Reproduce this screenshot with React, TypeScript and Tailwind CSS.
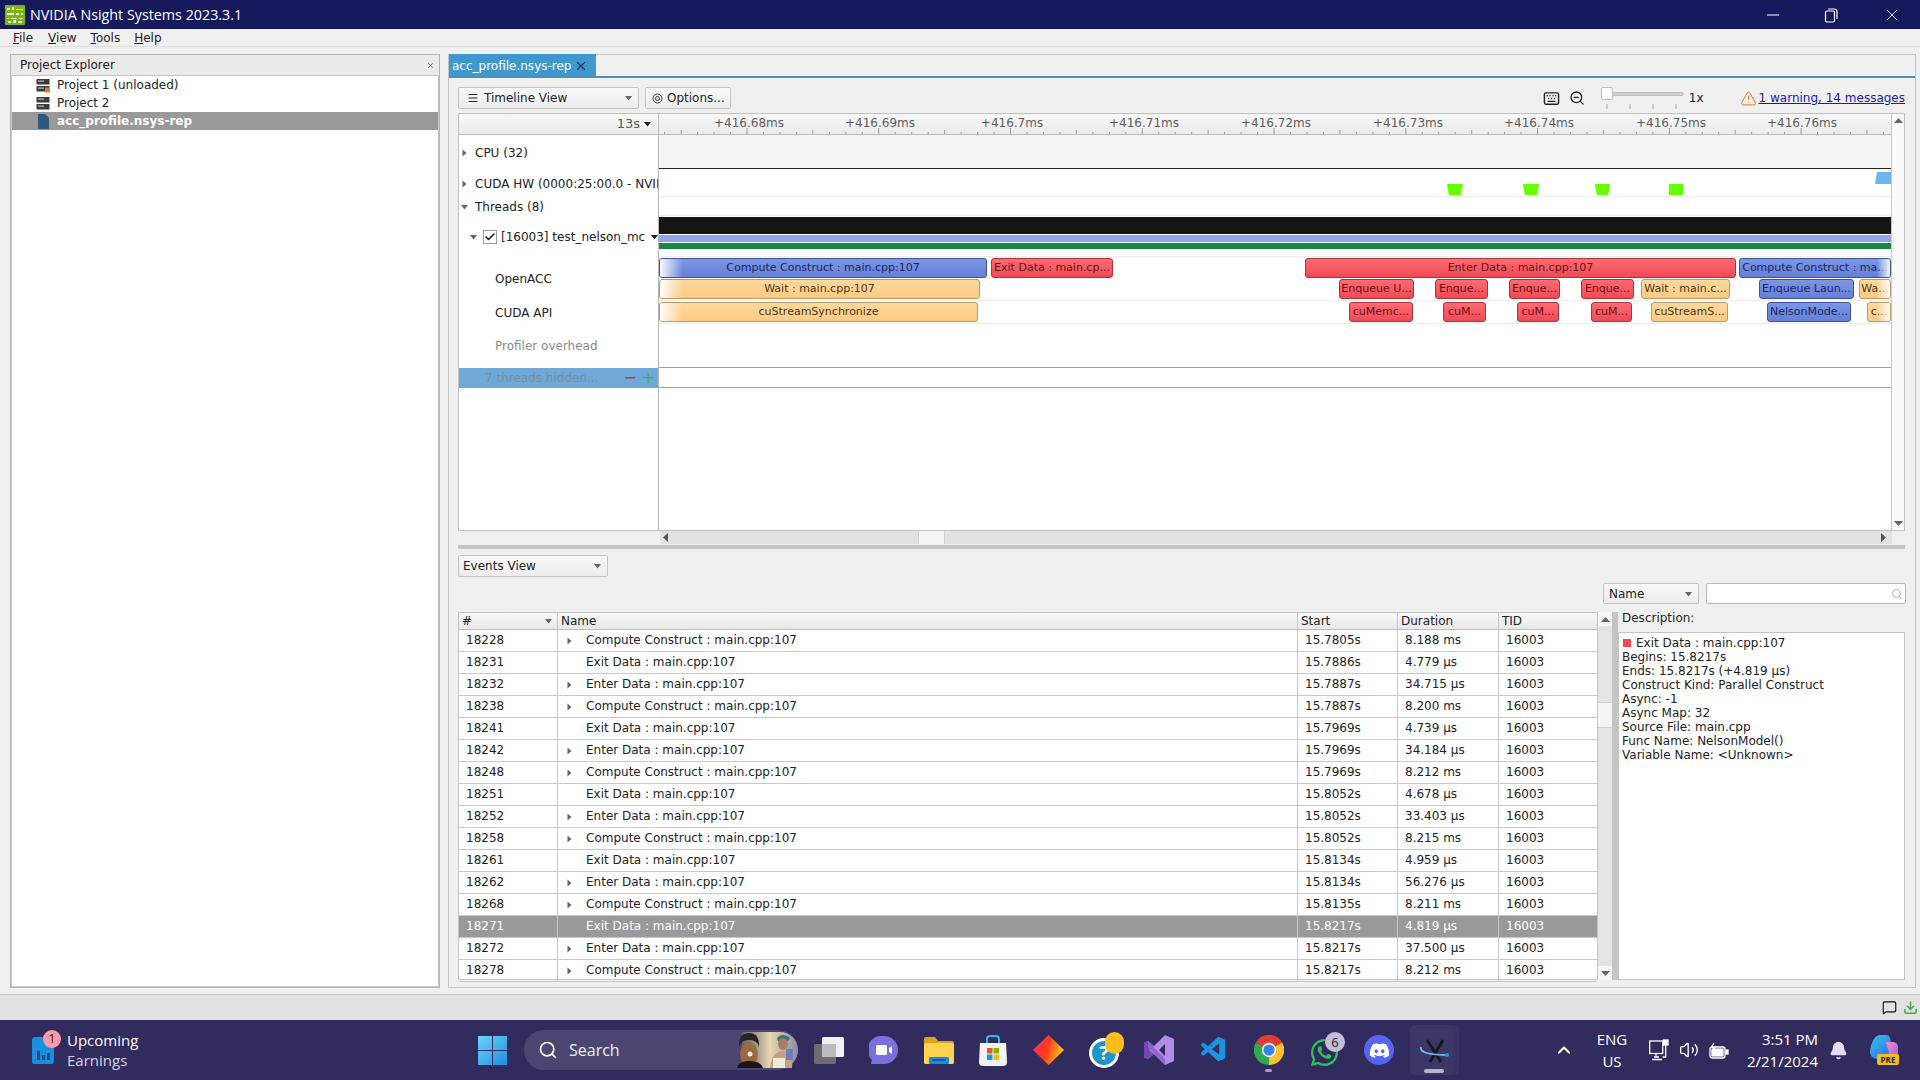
import React from "react";
import { ChevronUp, Search, Volume2, Bell, MessageSquare, Download, Menu, Keyboard, ZoomOut, TriangleAlert, Check, X } from "lucide-react";
import { FaDiscord, FaWhatsapp } from "react-icons/fa";
import { VscVscode } from "react-icons/vsc";

type Bar = { x: number; e: number; c: "r" | "b" | "o"; t: string; fl?: boolean; fr?: boolean };

const barStyles = {
  r: "bg-gradient-to-b from-[#ff6a72] to-[#ef4a55] border-[#a8343c] text-[#6a1118]",
  b: "bg-gradient-to-b from-[#7c96e6] to-[#6580d8] border-[#3f5296] text-[#1a2660]",
  o: "bg-gradient-to-b from-[#ffd89e] to-[#fdca82] border-[#b89a62] text-[#4a3713]",
};

const OFFSET = 659;

const row1: Bar[] = [
  { x: 659, e: 987, c: "b", t: "Compute Construct : main.cpp:107", fl: true },
  { x: 991, e: 1113, c: "r", t: "Exit Data : main.cp..." },
  { x: 1305, e: 1736, c: "r", t: "Enter Data : main.cpp:107" },
  { x: 1739, e: 1891, c: "b", t: "Compute Construct : ma...", fr: true },
];
const row2: Bar[] = [
  { x: 659, e: 980, c: "o", t: "Wait : main.cpp:107", fl: true },
  { x: 1339, e: 1414, c: "r", t: "Enqueue U..." },
  { x: 1435, e: 1488, c: "r", t: "Enque..." },
  { x: 1509, e: 1560, c: "r", t: "Enque..." },
  { x: 1581, e: 1634, c: "r", t: "Enque..." },
  { x: 1641, e: 1730, c: "o", t: "Wait : main.c..." },
  { x: 1759, e: 1854, c: "b", t: "Enqueue Laun..." },
  { x: 1859, e: 1891, c: "o", t: "Wa...", fr: true },
];
const row3: Bar[] = [
  { x: 659, e: 978, c: "o", t: "cuStreamSynchronize", fl: true },
  { x: 1349, e: 1413, c: "r", t: "cuMemc..." },
  { x: 1443, e: 1486, c: "r", t: "cuM..." },
  { x: 1517, e: 1559, c: "r", t: "cuM..." },
  { x: 1591, e: 1632, c: "r", t: "cuM..." },
  { x: 1651, e: 1728, c: "o", t: "cuStreamS..." },
  { x: 1767, e: 1851, c: "b", t: "NelsonMode..." },
  { x: 1867, e: 1891, c: "o", t: "c...", fr: true },
];

function Bars({ bars, top }: { bars: Bar[]; top: number }) {
  return (
    <>
      {bars.map((b) => (
        <div
          key={b.x + b.t}
          className={`absolute h-[20px] rounded-[3px] border text-[11px] leading-[17px] text-center overflow-hidden whitespace-nowrap ${barStyles[b.c]}`}
          style={{ left: b.x - OFFSET, width: b.e - b.x, top }}
        >
          {b.t}
          {b.fl && <div className="absolute -left-[1px] -top-[1px] -bottom-[1px] w-[24px] bg-gradient-to-r from-white to-transparent" />}
          {b.fr && <div className="absolute -right-[1px] -top-[1px] -bottom-[1px] w-[14px] bg-gradient-to-l from-white to-transparent" />}
        </div>
      ))}
    </>
  );
}

const Tri = ({ d = "r", c = "#666" }: { d?: "r" | "d"; c?: string }) => (
  <svg width="7" height="8" viewBox="0 0 7 8" className="shrink-0">
    {d === "r" ? <path d="M1.5 0.5 L5.5 4 L1.5 7.5Z" fill={c} /> : <path d="M0 2 H7 L3.5 6.5Z" fill={c} />}
  </svg>
);

const Combo = ({ w, text, pad, icon }: { w: string; text: string; pad: string; icon?: React.ReactNode }) => (
  <div className={`${w} ${pad} h-[22px] flex items-center gap-[5px] rounded-[2px] border border-[#c4c4c4] bg-gradient-to-b from-[#f8f8f8] to-[#ededed] text-[12px] text-[#222]`}>
    {icon}
    <span>{text}</span>
    <span className="ml-auto mr-[6px]"><Tri d="d" /></span>
  </div>
);

function LabelRow({ h, label, lane, lbg = "bg-white", lineB = "border-[#ededed]" }: { h: string; label: React.ReactNode; lane?: React.ReactNode; lbg?: string; lineB?: string }) {
  return (
    <div className={`flex ${h}`}>
      <div className={`w-[200px] shrink-0 border-r border-[#b8b8b8] flex items-center overflow-hidden whitespace-nowrap ${lbg}`}>{label}</div>
      <div className={`flex-1 relative border-b ${lineB}`}>{lane}</div>
    </div>
  );
}

const rows = [
  ["18228", true, "Compute Construct : main.cpp:107", "15.7805s", "8.188 ms"],
  ["18231", false, "Exit Data : main.cpp:107", "15.7886s", "4.779 µs"],
  ["18232", true, "Enter Data : main.cpp:107", "15.7887s", "34.715 µs"],
  ["18238", true, "Compute Construct : main.cpp:107", "15.7887s", "8.200 ms"],
  ["18241", false, "Exit Data : main.cpp:107", "15.7969s", "4.739 µs"],
  ["18242", true, "Enter Data : main.cpp:107", "15.7969s", "34.184 µs"],
  ["18248", true, "Compute Construct : main.cpp:107", "15.7969s", "8.212 ms"],
  ["18251", false, "Exit Data : main.cpp:107", "15.8052s", "4.678 µs"],
  ["18252", true, "Enter Data : main.cpp:107", "15.8052s", "33.403 µs"],
  ["18258", true, "Compute Construct : main.cpp:107", "15.8052s", "8.215 ms"],
  ["18261", false, "Exit Data : main.cpp:107", "15.8134s", "4.959 µs"],
  ["18262", true, "Enter Data : main.cpp:107", "15.8134s", "56.276 µs"],
  ["18268", true, "Compute Construct : main.cpp:107", "15.8135s", "8.211 ms"],
  ["18271", false, "Exit Data : main.cpp:107", "15.8217s", "4.819 µs"],
  ["18272", true, "Enter Data : main.cpp:107", "15.8217s", "37.500 µs"],
  ["18278", true, "Compute Construct : main.cpp:107", "15.8217s", "8.212 ms"],
] as const;

const rulerLabels = [
  [749, "+416.68ms"], [880, "+416.69ms"], [1012, "+416.7ms"], [1144, "+416.71ms"], [1276, "+416.72ms"],
  [1408, "+416.73ms"], [1539, "+416.74ms"], [1671, "+416.75ms"], [1802, "+416.76ms"],
] as const;

function Ruler() {
  const ticks: React.ReactNode[] = [];
  for (let i = -6; i < 76; i++) {
    const x = 747 - OFFSET + i * 16.47;
    const major = i % 8 === 0;
    const mid = i % 4 === 0;
    ticks.push(<line key={i} x1={x} x2={x} y1={major ? 14 : mid ? 16 : 18} y2={21} stroke="#9a9a9a" strokeWidth="1" />);
  }
  return (
    <div className="flex-1 relative bg-gradient-to-b from-[#f8f8f8] to-[#ebebeb] border-b border-[#bdbdbd] overflow-hidden">
      <svg width="1232" height="21" className="absolute left-0 top-0">{ticks}</svg>
      {rulerLabels.map(([x, t]) => (
        <span key={t} className="absolute top-[1px] -translate-x-1/2 text-[12px] leading-[16px] text-[#5c5c5c] whitespace-nowrap" style={{ left: x - OFFSET }}>{t}</span>
      ))}
    </div>
  );
}

const marks = [[1447, 1463], [1523, 1539], [1595, 1610]];

const Logo = () => (
  <svg width="20" height="20" viewBox="0 0 20 20" className="shrink-0">
    <rect width="20" height="20" rx="1" fill="#76b900" />
    <path d="M2 3h3v2H2zM7 2h2v3H7zM11 4h7v1H11zM2 8h7v2H2zM11 8h3v2h-3zM16 8h2v2h-2zM2 13h2v1H2zM6 13h6v1H6zM14 13h4v1h-4zM3 16h3v2H3zM8 15h3v3H8zM13 16h4v2h-4z" fill="#fff" />
  </svg>
);

const ProjIcon = ({ warn }: { warn?: boolean }) => (
  <svg width="14" height="15" viewBox="0 0 14 15" className="shrink-0">
    <rect x="0.5" y="1" width="13" height="5.5" rx="0.5" fill="#3b3b3b" />
    <rect x="0.5" y="8" width="13" height="5.5" rx="0.5" fill="#3b3b3b" />
    <rect x="2" y="2.5" width="6" height="1.2" fill="#bbb" />
    <rect x="2" y="9.5" width="6" height="1.2" fill="#bbb" />
    {warn && <rect x="9" y="9.5" width="5" height="5" fill="#e8762d" />}
  </svg>
);

function Taskbar() {
  return (
    <div className="h-[60px] bg-[#322c5e] flex items-center text-white font-['Open_Sans',sans-serif] relative shrink-0">
      <div className="w-[32px]" />
      <div className="relative w-[35px] h-[27px] shrink-0">
        <svg width="22" height="27" viewBox="0 0 22 27" className="absolute left-0 top-0">
          <rect width="22" height="27" rx="3" fill="#1a90dc" />
          <path d="M5 14h3v9H5zM10 18h3v5h-3zM15 16h3v7h-3z" fill="#0b4f8a" />
        </svg>
        <div className="absolute left-[11px] -top-[7px] w-[18px] h-[18px] rounded-full bg-[#ff9aa6] text-[#3a1020] text-[12px] leading-[18px] text-center">1</div>
      </div>
      <div className="text-[15px] leading-[20px] w-[100px] shrink-0">
        <div>Upcoming</div>
        <div className="text-[#d5d3e2]">Earnings</div>
      </div>
      <div className="w-[311px] shrink-0" />
      <svg width="29" height="29" viewBox="0 0 29 29" className="shrink-0">
        <defs><linearGradient id="w" x1="0" y1="0" x2="1" y2="1"><stop offset="0" stopColor="#6fd2f7" /><stop offset="1" stopColor="#1b8fe0" /></linearGradient></defs>
        <path d="M0 0h14v14H0zM15 0h14v14H15zM0 15h14v14H0zM15 15h14v14H15z" fill="url(#w)" />
      </svg>
      <div className="ml-[17px] w-[274px] h-[40px] rounded-full bg-[#4c4672] flex items-center pl-[14px] relative shrink-0">
        <Search size={20} strokeWidth={2} />
        <span className="ml-[11px] text-[16px] text-[#eeeeee]">Search</span>
        <svg width="64" height="36" viewBox="0 0 64 36" className="absolute right-0 top-[2px]">
          <defs><linearGradient id="pb" x1="0" y1="0" x2="1" y2="0"><stop offset="0" stopColor="#d8c8a0" stopOpacity="0.2" /><stop offset="0.5" stopColor="#e8d8b0" /><stop offset="1" stopColor="#8f8aa8" /></linearGradient></defs>
          <path d="M8 0H46a18 18 0 0 1 0 36H8z" fill="url(#pb)" />
          <ellipse cx="15" cy="22" rx="9" ry="12" fill="#9a6a42" />
          <path d="M5 16 Q4 1 15 1 Q26 1 25 16 Q24 8 15 8 Q6 8 5 16Z" fill="#2a2320" />
          <circle cx="16" cy="22" r="2.5" fill="#f0e8d8" />
          <path d="M3 36 Q5 29 15 29 Q27 29 29 36Z" fill="#1a1512" />
          <path d="M43 6 Q48 0 56 6 L54 9 H44Z" fill="#2f7a70" />
          <ellipse cx="49" cy="12" rx="5" ry="6" fill="#a97d5e" />
          <path d="M36 36 Q38 19 49 19 Q60 21 58 36Z" fill="#c8a080" />
          <rect x="39" y="26" width="12" height="10" fill="#f0ead8" />
          <rect x="52" y="17" width="7" height="11" fill="#6a80b8" />
        </svg>
      </div>
      <div className="ml-[16px] flex items-center shrink-0">
        <svg width="30" height="27" viewBox="0 0 30 27" className="shrink-0">
          <rect y="7" width="22" height="20" rx="1.5" fill="#6f6c70" />
          <rect x="8" y="0" width="22" height="20" rx="1.5" fill="#f0f0f2" />
          <rect x="8" y="7" width="14" height="13" fill="#bcbcc0" />
        </svg>
        <svg width="29" height="29" viewBox="0 0 29 29" className="ml-[25px] shrink-0">
          <path d="M15 0a14 14 0 0 1 0 28H2l1-4A14 14 0 0 1 15 0z" fill="#7b70e0" />
          <rect x="7" y="9" width="11" height="10" rx="1.5" fill="#fff" />
          <path d="M20 12l3-2v8l-3-2z" fill="#fff" />
        </svg>
        <svg width="30" height="27" viewBox="0 0 30 27" className="ml-[26px] shrink-0">
          <path d="M0 2a2 2 0 0 1 2-2h9l3 4h14a2 2 0 0 1 2 2v4H0z" fill="#dca31a" />
          <rect y="6" width="30" height="21" rx="1.5" fill="#ffd34d" />
          <rect x="5" y="20" width="20" height="7" rx="1" fill="#1b8ae0" />
          <rect x="8" y="22" width="14" height="2" fill="#0f5fa8" />
        </svg>
        <svg width="30" height="31" viewBox="0 0 30 31" className="ml-[24px] shrink-0">
          <path d="M9 8V4a3 3 0 0 1 3-3h6a3 3 0 0 1 3 3v4" stroke="#35b4ee" strokeWidth="2" fill="none" />
          <path d="M2 8h26l1 19a4 4 0 0 1-4 4H5a4 4 0 0 1-4-4z" fill="#f2f2f2" />
          <rect x="9" y="13" width="5.5" height="5.5" fill="#f25022" /><rect x="15.5" y="13" width="5.5" height="5.5" fill="#7fba00" />
          <rect x="9" y="19.5" width="5.5" height="5.5" fill="#00a4ef" /><rect x="15.5" y="19.5" width="5.5" height="5.5" fill="#ffb900" />
        </svg>
        <svg width="31" height="30" viewBox="0 0 31 30" className="ml-[25px] shrink-0">
          <defs><linearGradient id="dm" x1="0" y1="0" x2="1" y2="0.3"><stop offset="0" stopColor="#ff2d6e" /><stop offset="0.55" stopColor="#ff3a1c" /><stop offset="1" stopColor="#ffc21c" /></linearGradient></defs>
          <path d="M15.5 0L31 15 15.5 30 0 15z" fill="url(#dm)" />
        </svg>
        <div className="relative ml-[25px] w-[35px] h-[36px] shrink-0">
          <div className="absolute left-0 bottom-0 w-[30px] h-[30px] rounded-full border-[3px] border-white bg-[#1d96c8] text-center text-[20px] leading-[24px] font-bold text-white">?</div>
          <div className="absolute right-0 top-0 w-[19px] h-[22px] rounded-full bg-[#ffbe1c]" />
        </div>
        <svg width="30" height="30" viewBox="0 0 30 30" className="ml-[20px] shrink-0">
          <path d="M21 0l9 4v22l-9 4-11-11-6 5-4-2V8l4-2 6 5zM21 9l-6 6 6 6z" fill="#b48be8" fillRule="evenodd" />
          <path d="M4 6L0 8v14l4 2 6-5-5-4 5-4z" fill="#6f4bb0" />
          <path d="M4 6l17 18v6L4 12z" fill="#8f63d4" />
        </svg>
        <span className="ml-[25px] shrink-0"><VscVscode size={30} color="#1c93e0" /></span>
        <div className="relative ml-[25px] w-[30px] h-[30px] shrink-0">
          <svg width="30" height="30" viewBox="0 0 48 48">
            <path d="M24 24L45 12A24 24 0 0 0 3 12z" fill="#e33b2e" />
            <path d="M24 24L3 12A24 24 0 0 0 24 48z" fill="#2fa84f" />
            <path d="M24 24L24 48A24 24 0 0 0 45 12z" fill="#fbc02d" />
            <circle cx="24" cy="24" r="11.5" fill="#fff" />
            <circle cx="24" cy="24" r="9" fill="#3b82e8" />
          </svg>
          <div className="absolute left-[11px] top-[34px] w-[7px] h-[3px] rounded-full bg-[#a8a4c0]" />
        </div>
        <div className="relative ml-[25px] w-[36px] h-[36px] shrink-0">
          <span className="absolute left-0 bottom-0"><FaWhatsapp size={31} color="#2fc25a" /></span>
          <div className="absolute right-0 top-0 w-[20px] h-[20px] rounded-full bg-[#c4bdd8] text-[#222] text-[13px] leading-[20px] text-center">6</div>
        </div>
        <div className="ml-[19px] w-[30px] h-[30px] rounded-full bg-[#5865f2] flex items-center justify-center shrink-0">
          <FaDiscord size={21} color="#fff" />
        </div>
        <div className="ml-[16px] w-[49px] h-[50px] relative shrink-0">
          <div className="absolute right-0 top-0 bottom-0 w-[12px] rounded-[5px] bg-[#3a3466]" />
          <div className="absolute left-0 top-0 bottom-0 w-[43px] rounded-[5px] bg-[#3d3768]" />
          <svg width="30" height="24" viewBox="0 0 30 24" className="absolute left-[10px] top-[14px]">
            <path d="M7 1l14 22M23 1L10 23" stroke="#15151c" strokeWidth="2.6" fill="none" />
            <path d="M1 8q-2 8 27 8" stroke="#6fb8e0" strokeWidth="1.8" fill="none" />
            <circle cx="27" cy="16" r="2" fill="#1e9be8" />
          </svg>
          <div className="absolute bottom-[2px] left-[14px] w-[20px] h-[4px] rounded-full bg-[#b8b4d0]" />
        </div>
      </div>
      <div className="w-[95px] shrink-0" />
      <ChevronUp size={20} strokeWidth={2.5} className="shrink-0" />
      <div className="ml-[18px] w-[40px] text-center text-[15px] leading-[22px] shrink-0">
        <div>ENG</div><div>US</div>
      </div>
      <svg width="20" height="22" viewBox="0 0 20 22" className="ml-[17px] shrink-0" fill="none" stroke="#fff" strokeWidth="1.3">
        <rect x="0.7" y="2" width="13" height="12.5" /><path d="M7 14.5v3M3 20.5h10M5 18h5" /><rect x="14.5" y="1" width="4.5" height="5" fill="#fff" /><path d="M16.7 6v12h-3" />
      </svg>
      <Volume2 size={20} strokeWidth={1.6} className="ml-[10px] shrink-0" />
      <svg width="20" height="17" viewBox="0 0 20 17" className="ml-[10px] shrink-0" fill="none" stroke="#fff" strokeWidth="1.3">
        <rect x="1" y="5" width="15" height="11" rx="2" /><rect x="3" y="7" width="11" height="7" fill="#fff" /><path d="M5 1L2.5 5H6L4 8" /><rect x="17" y="8" width="2" height="4" fill="#fff" />
      </svg>
      <div className="ml-[4px] w-[85px] text-right text-[15px] leading-[22px] shrink-0">
        <div>3:51 PM</div><div>2/21/2024</div>
      </div>
      <Bell size={19} fill="#e4def5" color="#e4def5" className="ml-[11px] shrink-0" />
      <div className="relative ml-[21px] w-[30px] h-[30px] shrink-0">
        <svg width="30" height="27" viewBox="0 0 30 27" className="absolute top-0 left-0">
          <defs>
            <linearGradient id="cp1" x1="0" y1="0" x2="1" y2="1"><stop offset="0" stopColor="#2fc8e8" /><stop offset="0.7" stopColor="#3a7de8" /><stop offset="1" stopColor="#7fd860" /></linearGradient>
            <linearGradient id="cp2" x1="0" y1="0" x2="1" y2="1"><stop offset="0" stopColor="#ff8ac0" /><stop offset="1" stopColor="#9a60e8" /></linearGradient>
          </defs>
          <path d="M10 0h7a4 4 0 0 1 4 3l5 21H8a7 7 0 0 1-7-8q2-14 9-16z" fill="url(#cp1)" />
          <path d="M17 7h7a5 5 0 0 1 5 5v12H22z" fill="url(#cp2)" />
        </svg>
        <div className="absolute bottom-0 right-0 w-[22px] h-[11px] rounded-[2px] bg-[#efc020] text-[#2a2410] text-[8px] leading-[11px] font-bold text-center">PRE</div>
      </div>
    </div>
  );
}

export default function App() {
  return (
    <div className="w-[1920px] h-[1080px] flex flex-col overflow-hidden bg-[#f0f0f0] font-['DejaVu_Sans',sans-serif] text-[12px] text-[#222]">
      {/* title bar */}
      <div className="h-[29px] shrink-0 bg-[#161a5c] flex items-center pl-[5px] text-white">
        <Logo />
        <span className="ml-[5px] font-['Open_Sans',sans-serif] text-[14.3px]">NVIDIA Nsight Systems 2023.3.1</span>
        <div className="ml-auto flex items-center">
          <svg width="14" height="14" viewBox="0 0 14 14" className="mr-[44px]"><path d="M1 7h12" stroke="#fff" strokeWidth="1" /></svg>
          <svg width="14" height="16" viewBox="0 0 14 16" fill="none" stroke="#fff" strokeWidth="1.2" className="mr-[45px]">
            <rect x="1.5" y="4" width="9" height="11" rx="1.5" /><path d="M4 2h6a3 3 0 0 1 3 3v7" />
          </svg>
          <X size={18} strokeWidth={1.2} className="mr-[19px]" />
        </div>
      </div>
      {/* menu */}
      <div className="h-[18px] shrink-0 flex items-center pl-[13px] gap-[13px] text-[12px] text-[#222] border-b border-[#dedede]">
        <span><u>F</u>ile</span><span className="ml-[2px]"><u>V</u>iew</span><span className="ml-[1px]"><u>T</u>ools</span><span className="ml-[1px]"><u>H</u>elp</span>
      </div>
      {/* main */}
      <div className="flex-1 min-h-0 flex border-b border-[#c4c4c4] pt-[7px] pb-[6px] pl-[10px] pr-[4px]">
        {/* left */}
        <div className="w-[430px] shrink-0 border border-[#b4b4b4] flex flex-col bg-white">
          <div className="h-[21px] shrink-0 bg-[#eaeaea] border-b border-[#c4c4c4] flex items-center pl-[9px] pr-[4px]">
            <span>Project Explorer</span>
            <X size={9} strokeWidth={2} className="ml-auto text-[#777]" />
          </div>
          <div className="flex-1 border-x border-b border-[#c8c8c8]">
            <div className="h-[18px] flex items-center pl-[24px] gap-[7px]"><ProjIcon warn /><span>Project 1 (unloaded)</span></div>
            <div className="h-[18px] flex items-center pl-[24px] gap-[7px]"><ProjIcon /><span>Project 2</span></div>
            <div className="h-[18px] flex items-center pl-[24px] gap-[7px] bg-[#999999] text-white font-bold">
              <svg width="14" height="15" viewBox="0 0 14 15" className="shrink-0"><path d="M2 0h7l4 4v11H2z" fill="#2d5a7c" /></svg>
              <span>acc_profile.nsys-rep</span>
            </div>
          </div>
        </div>
        {/* right */}
        <div className="ml-[8px] flex-1 border border-[#c4c4c4] flex flex-col min-w-0">
          <div className="h-[23px] shrink-0 border-b-2 border-[#4a8fb8] flex items-end">
            <div className="h-[22px] w-[147px] bg-[#3f97cf] text-white flex items-center pl-[3px] gap-[3px] pt-[1px]">
              <span>acc_profile.nsys-rep</span>
              <X size={14} strokeWidth={2} className="text-[#173a56]" />
            </div>
          </div>
          <div className="flex-1 flex flex-col pl-[9px] pr-[10px] pt-[9px] min-h-0">
            {/* toolbar */}
            <div className="flex items-center h-[22px] shrink-0">
              <Combo w="w-[181px]" pad="pl-[8px]" text="Timeline View" icon={<Menu size={12} />} />
              <div className="ml-[6px] w-[86px] h-[22px] flex items-center gap-[4px] pl-[6px] rounded-[2px] border border-[#c4c4c4] bg-gradient-to-b from-[#f8f8f8] to-[#ededed]">
                <svg width="11" height="11" viewBox="0 0 11 11" fill="none" stroke="#333" strokeWidth="1"><circle cx="5.5" cy="5.5" r="4.5" /><circle cx="5.5" cy="5.5" r="2" /></svg>
                <span>Options...</span>
              </div>
              <div className="ml-auto flex items-center">
                <Keyboard size={17} className="text-[#222]" />
                <ZoomOut size={16} className="ml-[9px] text-[#222]" />
                <div className="relative ml-[16px] w-[83px] h-[22px]">
                  <div className="absolute left-0 right-0 top-[5px] h-[4px] rounded-full bg-[#d0d0d0] border border-[#c0c0c0]" />
                  <div className="absolute left-0 top-0 w-[12px] h-[13px] rounded-[2px] bg-white border border-[#bcbcbc]" />
                  <svg width="83" height="6" className="absolute left-0 top-[17px]"><path d="M6 0v5M29 0v5M52 0v5M75 0v5" stroke="#aaa" /></svg>
                </div>
                <span className="ml-[5px]">1x</span>
                <TriangleAlert size={17} strokeWidth={1.4} className="ml-[36px] text-[#e8762d]" />
                <span className="ml-[2px] text-[#1a1ab0] underline">1 warning, 14 messages</span>
              </div>
            </div>
            {/* timeline */}
            <div className="mt-[4px] h-[418px] shrink-0 border border-[#c0c0c0] flex bg-white">
              <div className="flex-1 min-w-0 flex flex-col">
                <div className="flex h-[21px] shrink-0">
                  <div className="w-[200px] shrink-0 border-r border-b border-[#bdbdbd] bg-gradient-to-b from-[#f8f8f8] to-[#ebebeb] flex items-center justify-end pr-[7px] gap-[4px] text-[13px] text-[#555]">
                    <span>13s</span><Tri d="d" c="#222" />
                  </div>
                  <Ruler />
                </div>
                <LabelRow h="h-[34px]" lineB="border-[#222] bg-[#f5f5f5]" label={<span className="flex items-center pt-[2px]"><span className="ml-[2px] mr-[7px]"><Tri /></span>CPU (32)</span>} />
                <LabelRow h="h-[28px]" label={<span className="flex items-center pt-[2px]"><span className="ml-[2px] mr-[7px]"><Tri /></span>CUDA HW (0000:25:00.0 - NVIDIA</span>} lane={
                  <>
                    {marks.map(([a, b]) => (
                      <div key={a} className="absolute top-[15px] h-[11px] bg-[#66ff00] [clip-path:polygon(0_0,100%_0,88%_100%,12%_100%)]" style={{ left: a - OFFSET, width: b - a }} />
                    ))}
                    <div className="absolute top-[15px] h-[11px] bg-[#66ff00]" style={{ left: 1669 - OFFSET, width: 14 }} />
                    <div className="absolute top-[3px] h-[12px] bg-[#6fb4ea] [clip-path:polygon(12%_0,100%_0,100%_100%,0_100%)]" style={{ left: 1875 - OFFSET, width: 16 }} />
                  </>
                } />
                <LabelRow h="h-[19px]" label={<span className="flex items-center"><span className="ml-[2px] mr-[7px]"><Tri d="d" /></span>Threads (8)</span>} />
                <LabelRow h="h-[41px]" label={
                  <span className="flex items-center w-full">
                    <span className="ml-[11px] mr-[6px]"><Tri d="d" /></span>
                    <span className="w-[14px] h-[14px] border border-[#9a9a9a] flex items-center justify-center bg-white"><Check size={12} strokeWidth={3} className="text-[#111]" /></span>
                    <span className="ml-[4px] w-[153px] overflow-hidden">[16003] test_nelson_mc</span>
                    <span className="ml-[-2px]"><Tri d="d" c="#222" /></span>
                  </span>
                } lane={
                  <div className="pt-[1px] flex flex-col">
                    <div className="h-[17px] bg-[#151515]" />
                    <div className="h-[7px] mt-[1px] bg-[#8ea6ea]" />
                    <div className="h-[6px] mt-[1px] bg-[#168a45]" />
                  </div>
                } />
                <LabelRow h="h-[44px]" label={<span className="ml-[36px]">OpenACC</span>} lane={<><Bars bars={row1} top={1} /><Bars bars={row2} top={22} /></>} />
                <LabelRow h="h-[23px]" label={<span className="ml-[36px]">CUDA API</span>} lane={<Bars bars={row3} top={1} />} />
                <LabelRow h="h-[44px]" lineB="border-[#8fa7b8]" label={<span className="ml-[36px] text-[#8a8a8a]">Profiler overhead</span>} />
                <LabelRow h="h-[20px]" lbg="bg-[#6fa8d6]" lineB="border-[#8fa7b8]" label={
                  <span className="flex items-center w-full">
                    <span className="ml-[26px] text-[#7a8ea0]">7 threads hidden...</span>
                    <span className="ml-auto text-[#b03a5a] text-[16px] leading-[16px] mr-[5px]">−</span>
                    <span className="text-[#3fae5a] text-[16px] leading-[16px] mr-[3px]">+</span>
                  </span>
                } />
                <div className="flex flex-1">
                  <div className="w-[200px] shrink-0 border-r border-[#b8b8b8]" />
                </div>
              </div>
              <div className="w-[13px] shrink-0 border-l border-[#c8c8c8] bg-[#fafafa] flex flex-col items-center justify-between py-[3px]">
                <svg width="9" height="7" viewBox="0 0 9 7"><path d="M0 6h9L4.5 1z" fill="#666" /></svg>
                <svg width="9" height="7" viewBox="0 0 9 7"><path d="M0 1h9L4.5 6z" fill="#666" /></svg>
              </div>
            </div>
            {/* horizontal scrollbar */}
            <div className="h-[13px] shrink-0 flex pr-[13px]">
              <div className="w-[202px] shrink-0" />
              <div className="flex-1 bg-[#e2e2e2] relative flex items-center justify-between pl-[3px] pr-[6px]">
                <svg width="6" height="9" viewBox="0 0 6 9"><path d="M5 0v9L0 4.5z" fill="#555" /></svg>
                <div className="absolute left-[258px] top-0 bottom-0 w-[27px] bg-[#f4f4f4] border-x border-[#cfcfcf]" />
                <svg width="6" height="9" viewBox="0 0 6 9"><path d="M1 0v9l5-4.5z" fill="#555" /></svg>
              </div>
            </div>
            <div className="h-[4px] mt-[1px] shrink-0 bg-[#c4c4c4]" />
            <div className="mt-[6px] shrink-0">
              <Combo w="w-[150px]" pad="pl-[4px]" text="Events View" />
            </div>
            <div className="mt-[6px] h-[21px] shrink-0 flex justify-end -mr-[1px]">
              <Combo w="w-[96px] !h-[21px]" pad="pl-[5px]" text="Name" />
              <div className="ml-[7px] w-[200px] h-[21px] bg-white border border-[#b8b8b8] rounded-[2px] flex items-center justify-end pr-[2px]">
                <Search size={12} className="text-[#b0b0b0]" />
              </div>
            </div>
            {/* table + desc */}
            <div className="mt-[8px] flex flex-1 min-h-0">
              <div className="w-[1140px] shrink-0 border border-[#c4c4c4] bg-white flex flex-col">
                <div className="h-[17px] shrink-0 flex bg-gradient-to-b from-[#f8f8f8] to-[#e8e8e8] border-b border-[#bdbdbd]">
                  <div className="w-[99px] border-r border-[#c8c8c8] flex items-center justify-between pl-[3px] pr-[5px]"><span>#</span><Tri d="d" /></div>
                  <div className="w-[740px] border-r border-[#c8c8c8] pl-[3px] leading-[17px]">Name</div>
                  <div className="w-[100px] border-r border-[#c8c8c8] pl-[3px] leading-[17px]">Start</div>
                  <div className="w-[101px] border-r border-[#c8c8c8] pl-[3px] leading-[17px]">Duration</div>
                  <div className="flex-1 pl-[3px] leading-[17px]">TID</div>
                </div>
                {rows.map((r) => {
                  const sel = r[0] === "18271";
                  return (
                    <div key={r[0]} className={`h-[22px] shrink-0 flex border-b border-[#c8c8c8] leading-[21px] ${sel ? "bg-[#999999] text-white" : ""}`}>
                      <div className="w-[99px] border-r border-[#c8c8c8] pl-[7px]">{r[0]}</div>
                      <div className="w-[740px] border-r border-[#c8c8c8] flex items-center">
                        <span className="w-[28px] pl-[8px] flex items-center">{r[1] && <Tri />}</span>
                        <span>{r[2]}</span>
                      </div>
                      <div className="w-[100px] border-r border-[#c8c8c8] pl-[7px]">{r[3]}</div>
                      <div className="w-[101px] border-r border-[#c8c8c8] pl-[7px]">{r[4]}</div>
                      <div className="flex-1 pl-[7px]">16003</div>
                    </div>
                  );
                })}
              </div>
              <div className="w-[14px] shrink-0 bg-[#e4e4e4] flex flex-col items-center justify-between relative">
                <div className="w-full h-[14px] bg-[#f6f6f6] flex items-center justify-center"><svg width="9" height="7" viewBox="0 0 9 7"><path d="M0 6h9L4.5 1z" fill="#666" /></svg></div>
                <div className="absolute top-[90px] left-0 w-full h-[26px] bg-[#f4f4f4] border-y border-[#cfcfcf]" />
                <div className="w-full h-[14px] bg-[#f6f6f6] flex items-center justify-center"><svg width="9" height="7" viewBox="0 0 9 7"><path d="M0 1h9L4.5 6z" fill="#666" /></svg></div>
              </div>
              <div className="w-[6px] shrink-0 bg-[#c4c4c4]" />
              <div className="flex-1 flex flex-col min-w-0 bg-[#f0f0f0]">
                <div className="h-[20px] shrink-0 pl-[4px] leading-[13px]">Description:</div>
                <div className="flex-1 bg-white border border-[#c4c4c4] pl-[3px] pt-[3px] leading-[14px]">
                  <div className="flex items-center"><span className="w-[8px] h-[8px] bg-[#f04a55] mr-[5px] ml-[1px]" />Exit Data : main.cpp:107</div>
                  <div>Begins: 15.8217s</div>
                  <div>Ends: 15.8217s (+4.819 µs)</div>
                  <div>Construct Kind: Parallel Construct</div>
                  <div>Async: -1</div>
                  <div>Async Map: 32</div>
                  <div>Source File: main.cpp</div>
                  <div>Func Name: NelsonModel()</div>
                  <div>Variable Name: &lt;Unknown&gt;</div>
                </div>
              </div>
            </div>
            <div className="h-[7px] shrink-0" />
          </div>
        </div>
      </div>
      {/* status */}
      <div className="h-[25px] shrink-0 bg-[#e2e2e2] flex items-center justify-end pr-[2px] gap-[6px]">
        <MessageSquare size={15} strokeWidth={1.8} className="text-[#111]" />
        <Download size={15} strokeWidth={2.4} className="text-[#46a84e]" />
      </div>
      <Taskbar />
    </div>
  );
}
